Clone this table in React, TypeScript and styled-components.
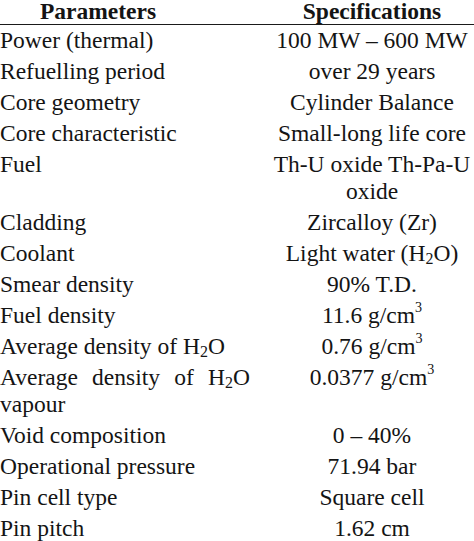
import React from "react";
import styled, { createGlobalStyle } from "styled-components";

const Global = createGlobalStyle`
  html, body { margin: 0; padding: 0; background: #ffffff; }
`;

const Table = styled.div`
  display: grid;
  grid-template-columns: 250px 1fr;
  width: 474px;
  font-family: "Liberation Serif", "Times New Roman", serif;
  font-size: 23.5px;
  line-height: 27px;
  color: #141414;
`;

const HeadCell = styled.div<{ $side: "left" | "right" }>`
  font-weight: bold;
  line-height: 22px;
  padding: 0 ${(p) => (p.$side === "left" ? "54px" : "0")} 2px
    ${(p) => (p.$side === "right" ? "20px" : "0")};
  text-align: center;
  border-bottom: 1.5px solid #1a1a1a;
`;

const ParamCell = styled.div`
  padding: 2px 0;
  text-align: justify;
`;

const SpecCell = styled.div`
  padding: 2px 0 2px 20px;
  text-align: center;
`;

const Sub = styled.sub`
  font-size: 0.68em;
  vertical-align: -0.18em;
  line-height: 0;
`;

const Sup = styled.sup`
  font-size: 0.6em;
  vertical-align: 0.75em;
  line-height: 0;
`;

const H2O = () => (
  <>
    H<Sub>2</Sub>O
  </>
);

const cm3 = (v: string) => (
  <>
    {v} g/cm<Sup>3</Sup>
  </>
);

const rows: [React.ReactNode, React.ReactNode][] = [
  ["Power (thermal)", "100 MW – 600 MW"],
  ["Refuelling period", "over 29 years"],
  ["Core geometry", "Cylinder Balance"],
  ["Core characteristic", "Small-long life core"],
  ["Fuel", "Th-U oxide Th-Pa-U oxide"],
  ["Cladding", "Zircalloy (Zr)"],
  [
    "Coolant",
    <>
      Light water (<H2O />)
    </>,
  ],
  ["Smear density", "90% T.D."],
  ["Fuel density", cm3("11.6")],
  [
    <>
      Average density of <H2O />
    </>,
    cm3("0.76"),
  ],
  [
    <>
      Average density of <H2O /> vapour
    </>,
    cm3("0.0377"),
  ],
  ["Void composition", "0 – 40%"],
  ["Operational pressure", "71.94 bar"],
  ["Pin cell type", "Square cell"],
  ["Pin pitch", "1.62 cm"],
];

export default function App() {
  return (
    <>
      <Global />
      <Table>
        <HeadCell $side="left">Parameters</HeadCell>
        <HeadCell $side="right">Specifications</HeadCell>
        {rows.map(([p, s], i) => (
          <React.Fragment key={i}>
            <ParamCell>{p}</ParamCell>
            <SpecCell>{s}</SpecCell>
          </React.Fragment>
        ))}
      </Table>
    </>
  );
}
